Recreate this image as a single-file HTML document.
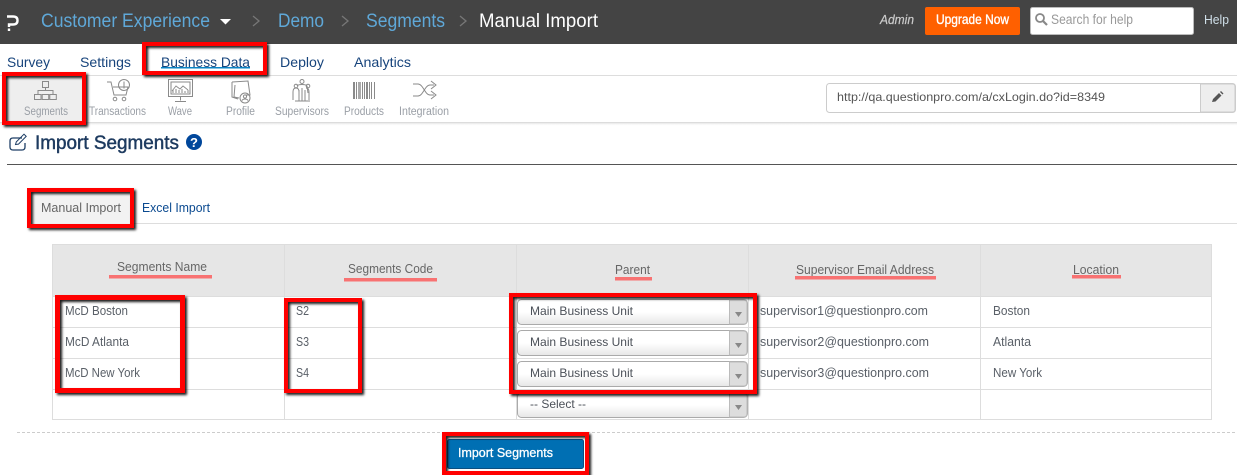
<!DOCTYPE html>
<html><head><meta charset="utf-8"><style>
html,body{margin:0;padding:0;background:#fff;width:1237px;height:475px;overflow:hidden}
svg{display:block}
text{font-family:"Liberation Sans",sans-serif}
.t{font-size:14px;fill:#17447c}
.n{font-size:11.500px;fill:#9a9fa6}
.h{font-size:13px;fill:#666}
.c{font-size:13px;fill:#5a6068}
.s{font-size:12px;fill:#4b5058}
.i{fill:none;stroke:#8a8a8a;stroke-width:1}
</style></head><body>
<svg width="1237" height="475" viewBox="0 0 1237 475" xmlns="http://www.w3.org/2000/svg">
<defs>
<filter id="sh" x="-10%" y="-10%" width="125%" height="125%"><feDropShadow dx="2" dy="2" stdDeviation="1.300" flood-color="#000" flood-opacity=".9"/></filter>
<linearGradient id="g" x1="0" y1="0" x2="0" y2="1"><stop offset="0" stop-color="#fff"/><stop offset=".5" stop-color="#fff"/><stop offset="1" stop-color="#e6e6e6"/></linearGradient>
<linearGradient id="sg" x1="0" y1="0" x2="0" y2="1"><stop offset="0" stop-color="#ccc" stop-opacity=".9"/><stop offset="1" stop-color="#fff" stop-opacity="0"/></linearGradient>
</defs>

<!-- top bar -->
<rect width="1237" height="44" fill="#444"/>
<path d="M7 16.500h6q4.500 0 4.500 4t-4.500 4h-4V27" fill="none" stroke="#fff" stroke-width="2.400"/>
<rect x="7.800" y="28.500" width="2.400" height="2.500" fill="#fff"/>
<text x="41" y="27" font-size="19" fill="#5fa8d8" textLength="169" lengthAdjust="spacingAndGlyphs">Customer Experience</text>
<path d="M220 19h11l-5.500 5.500z" fill="#fff"/>
<path d="M253 16l6 5-6 5M342 16l6 5-6 5M460 16l6 5-6 5" fill="none" stroke="#777" stroke-width="1.300"/>
<text x="278" y="27" font-size="19" fill="#5fa8d8" textLength="46" lengthAdjust="spacingAndGlyphs">Demo</text>
<text x="366" y="27" font-size="19" fill="#5fa8d8" textLength="79" lengthAdjust="spacingAndGlyphs">Segments</text>
<text x="479" y="27" font-size="19" fill="#fff" textLength="119" lengthAdjust="spacingAndGlyphs">Manual Import</text>
<text x="880" y="24" font-size="12.500" font-style="italic" fill="#ccc" stroke="#ccc" stroke-width=".2" textLength="34" lengthAdjust="spacingAndGlyphs">Admin</text>
<rect x="925" y="7" width="95" height="28" rx="2" fill="#ff6000"/>
<text x="936" y="24" font-size="13.500" fill="#fff" stroke="#fff" stroke-width=".35" textLength="73" lengthAdjust="spacingAndGlyphs">Upgrade Now</text>
<rect x="1030.500" y="7.500" width="163" height="27" rx="2" fill="#fff" stroke="#bbb"/>
<circle cx="1040" cy="18" r="4" fill="none" stroke="#888" stroke-width="1.800"/>
<path d="M1043 21l4 4" stroke="#888" stroke-width="2.200"/>
<text x="1051" y="24" font-size="13.500" fill="#999" textLength="82" lengthAdjust="spacingAndGlyphs">Search for help</text>
<text x="1204" y="24" font-size="13" fill="#cfdfe8" textLength="25" lengthAdjust="spacingAndGlyphs">Help</text>

<!-- primary tabs -->
<text class="t" x="7" y="67" textLength="43" lengthAdjust="spacingAndGlyphs">Survey</text>
<text class="t" x="80" y="67" textLength="51" lengthAdjust="spacingAndGlyphs">Settings</text>
<text class="t" x="161" y="67" textLength="89" lengthAdjust="spacingAndGlyphs">Business Data</text>
<rect x="161" y="67" width="89" height="1.500" fill="#0a84c6"/>
<text class="t" x="280" y="67" textLength="44" lengthAdjust="spacingAndGlyphs">Deploy</text>
<text class="t" x="354" y="67" textLength="57" lengthAdjust="spacingAndGlyphs">Analytics</text>
<rect y="75" width="1237" height="1" fill="#ddd"/>

<!-- subnav -->
<rect y="122" width="1237" height="4" fill="url(#sg)"/>
<rect x="5" y="76" width="79" height="46" fill="#eee"/>
<g class="i">
<path d="M42.500 81.500h6v6h-6zM45.500 87.500v3M38 94v-3.500h15V94M34.500 94.500h6.500v5h-6.500zM42.200 94.500h6.500v5h-6.500zM49.800 94.500h6.500v5h-6.500z"/>
<path d="M107 82h4l3 13h12l2-8h-15"/><circle cx="115" cy="99" r="1.800"/><circle cx="124" cy="99" r="1.800"/><circle cx="124" cy="85" r="5.500"/><path d="M124 81.500v7"/>
<path d="M168.500 79.500h24v17h-24zM171 82h19v12h-19zM180.500 96.500v4M175 101.500h11"/><path d="M172 91l4-5 4 3 3-3 5 4" stroke-width=".9"/><path d="M173 93v-3M176 93v-4M179 93v-3M182 93v-4M185 93v-2M188 93v-3"/>
<path d="M232 82l16-1 2 14h-5M232 82l0 15 6 2"/><path d="M235 85l-1 12 5 1"/><circle cx="245" cy="98" r="5"/><circle cx="245" cy="96.500" r="1.600"/><path d="M242 100.500c1-2 5-2 6 0"/>
<circle cx="302" cy="81.500" r="2"/><path d="M297 86c1-2 9-2 10 0l1 7M299 90v11M305 90v11"/><circle cx="296" cy="86" r="1.800"/><circle cx="308" cy="86" r="1.800"/><path d="M293 100v-8c0-3 1-4 3-4s3 1 3 4v9M309 100v-8c0-3-1-4-3-4M302 88v13M295 101h15"/>
<path d="M413 84h5c5 0 7 11 12 11h4M413 96h5c5 0 7-11 12-11h4M431 81l5 4-5 4M431 91l5 4-5 4"/>
</g>
<g fill="#8a8a8a">
<rect x="353" y="82" width="2" height="17"/><rect x="356" y="82" width="1" height="17"/><rect x="358" y="82" width="3" height="17" fill="#aaa"/><rect x="362" y="82" width="1" height="17"/><rect x="364" y="82" width="1" height="17"/><rect x="366" y="82" width="2" height="17"/><rect x="369" y="82" width="1" height="17"/><rect x="371" y="82" width="1" height="17"/><rect x="374" y="82" width="1" height="17"/>
</g>
<text class="n" x="24" y="115" textLength="44" lengthAdjust="spacingAndGlyphs">Segments</text>
<text class="n" x="89" y="115" textLength="57" lengthAdjust="spacingAndGlyphs">Transactions</text>
<text class="n" x="168" y="115" textLength="24" lengthAdjust="spacingAndGlyphs">Wave</text>
<text class="n" x="226" y="115" textLength="29" lengthAdjust="spacingAndGlyphs">Profile</text>
<text class="n" x="275" y="115" textLength="54" lengthAdjust="spacingAndGlyphs">Supervisors</text>
<text class="n" x="344" y="115" textLength="40" lengthAdjust="spacingAndGlyphs">Products</text>
<text class="n" x="399" y="115" textLength="50" lengthAdjust="spacingAndGlyphs">Integration</text>

<!-- url box -->
<rect x="826.500" y="83.500" width="409" height="29" rx="3" fill="#fff" stroke="#ccc"/>
<path d="M1200.500 84h32q2.500 0 2.500 2.500v23q0 2.500-2.500 2.500h-32z" fill="#eee" stroke="#ccc"/>
<text x="837" y="101" font-size="12" fill="#555" textLength="268" lengthAdjust="spacingAndGlyphs">http://qa.questionpro.com/a/cxLogin.do?id=8349</text>
<path d="M1212 102l1-3 6-6 2.500 2.500-6 6zM1220 92l1-1 2.500 2.500-1 1z" fill="#555"/>

<!-- heading -->
<path d="M22 138h-9q-3 0-3 3v6q0 3 3 3h9q3 0 3-3v-4" fill="none" stroke="#1f3f66" stroke-width="1.300"/>
<path d="M15.500 144.500l.8-2.600 7.700-7.700 2.200 2.200-7.700 7.700z" fill="none" stroke="#1f3f66"/>
<text x="35" y="149" font-size="19" fill="#1d3a5f" stroke="#1d3a5f" stroke-width=".45" textLength="144" lengthAdjust="spacingAndGlyphs">Import Segments</text>
<circle cx="194" cy="142" r="8" fill="#00479b"/>
<text x="194" y="147" font-size="13" font-weight="bold" fill="#fff" text-anchor="middle">?</text>
<rect x="7" y="164" width="1230" height="1" fill="#555"/>

<!-- sub tabs -->
<rect x="134" y="223" width="1103" height="1" fill="#ddd"/>
<rect x="29" y="190" width="103" height="36" fill="#f2f2f2"/>
<text class="h" x="41" y="212" textLength="80" lengthAdjust="spacingAndGlyphs">Manual Import</text>
<text x="142" y="212" font-size="13" fill="#0b4a90" textLength="68" lengthAdjust="spacingAndGlyphs">Excel Import</text>

<!-- table -->
<rect x="52.500" y="244.500" width="1159" height="52" fill="#e6e6e6"/>
<path d="M52.500 244.500h1159v175h-1159zM52.500 296.500h1159M52.500 327.500h1159M52.500 358.500h1159M52.500 389.500h1159M284.500 244.500v175M516.500 244.500v175M748.500 244.500v175M980.500 244.500v175" fill="none" stroke="#ddd"/>
<text class="h" x="117" y="271" textLength="90" lengthAdjust="spacingAndGlyphs">Segments Name</text>
<rect x="109" y="275" width="103" height="3.500" fill="#f87272"/>
<text class="h" x="348" y="273" textLength="85" lengthAdjust="spacingAndGlyphs">Segments Code</text>
<rect x="344" y="278" width="93" height="3.500" fill="#f87272"/>
<text class="h" x="615" y="274" textLength="35" lengthAdjust="spacingAndGlyphs">Parent</text>
<rect x="615" y="277" width="37" height="3.500" fill="#f87272"/>
<text class="h" x="796" y="274" textLength="138" lengthAdjust="spacingAndGlyphs">Supervisor Email Address</text>
<rect x="795" y="276" width="141" height="3.500" fill="#f87272"/>
<text class="h" x="1073" y="274" textLength="46" lengthAdjust="spacingAndGlyphs">Location</text>
<rect x="1072" y="275" width="49" height="3.500" fill="#f87272"/>

<text class="c" x="65" y="315" textLength="63" lengthAdjust="spacingAndGlyphs">McD Boston</text>
<text class="c" x="65" y="346" textLength="64" lengthAdjust="spacingAndGlyphs">McD Atlanta</text>
<text class="c" x="65" y="377" textLength="75" lengthAdjust="spacingAndGlyphs">McD New York</text>
<text class="c" x="296" y="315" textLength="13" lengthAdjust="spacingAndGlyphs">S2</text>
<text class="c" x="296" y="346" textLength="13" lengthAdjust="spacingAndGlyphs">S3</text>
<text class="c" x="296" y="377" textLength="13" lengthAdjust="spacingAndGlyphs">S4</text>
<text class="c" x="760" y="315" textLength="168" lengthAdjust="spacingAndGlyphs">supervisor1@questionpro.com</text>
<text class="c" x="760" y="346" textLength="169" lengthAdjust="spacingAndGlyphs">supervisor2@questionpro.com</text>
<text class="c" x="760" y="377" textLength="169" lengthAdjust="spacingAndGlyphs">supervisor3@questionpro.com</text>
<text class="c" x="993" y="315" textLength="37" lengthAdjust="spacingAndGlyphs">Boston</text>
<text class="c" x="993" y="346" textLength="38" lengthAdjust="spacingAndGlyphs">Atlanta</text>
<text class="c" x="993" y="377" textLength="49" lengthAdjust="spacingAndGlyphs">New York</text>

<!-- selects -->
<g>
<rect x="517.500" y="392.500" width="230" height="25" rx="4" fill="url(#g)" stroke="#aaa"/>
<path d="M729.500 393h14q3.500 0 3.500 3.500v17q0 3.500-3.500 3.500h-14z" fill="#ddd" stroke="#bbb"/>
<path d="M735 405h7l-3.500 5z" fill="#888"/>
<text class="s" x="530" y="408" textLength="56" lengthAdjust="spacingAndGlyphs">-- Select --</text>

<rect x="517.500" y="361.500" width="230" height="25" rx="4" fill="url(#g)" stroke="#aaa"/>
<path d="M729.500 362h14q3.500 0 3.500 3.500v17q0 3.500-3.500 3.500h-14z" fill="#ddd" stroke="#bbb"/>
<path d="M735 374h7l-3.500 5z" fill="#888"/>
<text class="s" x="530" y="377" textLength="103" lengthAdjust="spacingAndGlyphs">Main Business Unit</text>

<rect x="517.500" y="330.500" width="230" height="25" rx="4" fill="url(#g)" stroke="#aaa"/>
<path d="M729.500 331h14q3.500 0 3.500 3.500v17q0 3.500-3.500 3.500h-14z" fill="#ddd" stroke="#bbb"/>
<path d="M735 343h7l-3.500 5z" fill="#888"/>
<text class="s" x="530" y="346" textLength="103" lengthAdjust="spacingAndGlyphs">Main Business Unit</text>

<rect x="517.500" y="299.500" width="230" height="25" rx="4" fill="url(#g)" stroke="#aaa"/>
<path d="M729.500 300h14q3.500 0 3.500 3.500v17q0 3.500-3.500 3.500h-14z" fill="#ddd" stroke="#bbb"/>
<path d="M735 312h7l-3.500 5z" fill="#888"/>
<text class="s" x="530" y="315" textLength="103" lengthAdjust="spacingAndGlyphs">Main Business Unit</text>
</g>

<!-- footer -->
<path d="M17 432.500H1237" stroke="#ccc" stroke-dasharray="3 2"/>
<rect x="447.500" y="439.500" width="136" height="29" rx="2" fill="#006fb3" stroke="#0b4f80"/>
<text x="458" y="457" font-size="13" fill="#fff" stroke="#fff" stroke-width=".3" textLength="95" lengthAdjust="spacingAndGlyphs">Import Segments</text>

<!-- red annotation boxes -->
<g fill="none" stroke="#f00" filter="url(#sh)">
<rect x="144" y="44" width="121" height="29" stroke-width="4"/>
<rect x="4" y="74" width="80" height="49" stroke-width="4"/>
<rect x="29" y="190" width="103" height="36" stroke-width="4"/>
<rect x="57.500" y="297.500" width="125" height="93" stroke-width="5"/>
<rect x="286" y="300" width="74" height="91" stroke-width="4"/>
<rect x="511" y="295" width="244" height="97" stroke-width="4"/>
<rect x="444" y="434" width="143" height="39" stroke-width="4"/>
</g>
</svg>
</body></html>
